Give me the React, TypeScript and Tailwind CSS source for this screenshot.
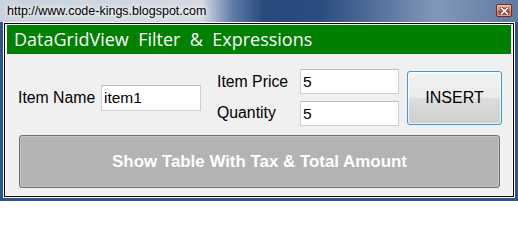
import React from "react";

const sans = "font-['Liberation_Sans',Arial,sans-serif]";

const TextBox = ({ value, className = "" }: { value: string; className?: string }) => (
  <div
    className={`flex items-center bg-white border border-[#cfcfcf] border-t-[#bdbdbd] pl-[2px] text-[15.5px] text-black ${className}`}
  >
    {value}
  </div>
);

const CloseButton = () => (
  <div className="absolute left-[496px] top-[4px] w-[16px] h-[13px] rounded-[2px] border border-[#6b2a1c] bg-[linear-gradient(180deg,#eab0a0_0%,#d98068_45%,#c2452a_55%,#d36c4c_100%)] flex items-center justify-center shadow-[inset_0_0_0_1px_rgba(255,255,255,0.35)]">
    <svg width="9" height="8" viewBox="0 0 9 8">
      <path d="M1.5 1.2 L7.5 6.8 M7.5 1.2 L1.5 6.8" stroke="#5a2418" strokeWidth="3.2" strokeLinecap="square" />
      <path d="M1.5 1.2 L7.5 6.8 M7.5 1.2 L1.5 6.8" stroke="#ffffff" strokeWidth="1.8" strokeLinecap="square" />
    </svg>
  </div>
);

export default function App() {
  return (
    <div className={`relative w-[518px] h-[201px] flex flex-col overflow-hidden bg-[#2d5490] ${sans}`}>
      {/* title bar */}
      <div className="h-[22px] shrink-0 flex items-center pl-[7px] bg-[linear-gradient(90deg,#c9d2de_0%,#d4dae3_39%,#5d7ba6_45%,#28497c_51%,#2b4c7f_62%,#8198b9_84%,#7189ad_92%,#5f7aa2_100%)]">
        <span className="text-[12.5px] text-black [text-shadow:0_0_6px_#fff,0_0_6px_#fff]">
          http://www.code-kings.blogspot.com
        </span>
      </div>
      <CloseButton />

      {/* client area */}
      <div className="mx-[3px] mb-[3px] flex-1 border border-white">
        <div className="h-full border border-black">
          <div className="h-full border border-white bg-[#f0f0f0] flex flex-col">
            <div className="h-[29px] shrink-0 mx-px bg-[#008000] flex items-center pl-[7px]">
              <span className="whitespace-pre text-white text-[18px] font-['Open_Sans','Noto_Sans',sans-serif]">
                DataGridView  Filter  &amp;  Expressions
              </span>
            </div>

            <div className="flex flex-col pl-[12px] pt-[15px]">
              <div className="flex items-center h-[57px]">
                <div className="flex items-center">
                  <span className="w-[83px] text-[15.8px] text-black">Item Name</span>
                  <TextBox value="item1" className="w-[100px] h-[26px]" />
                </div>

                <div className="ml-[16px] flex flex-col gap-[7px]">
                  <div className="flex items-center h-[25px]">
                    <span className="w-[83px] text-[15.8px] text-black">Item Price</span>
                    <TextBox value="5" className="w-[99px] h-[25px]" />
                  </div>
                  <div className="flex items-center h-[25px]">
                    <span className="w-[83px] text-[15.8px] text-black -mt-[2px]">Quantity</span>
                    <TextBox value="5" className="w-[99px] h-[25px]" />
                  </div>
                </div>

                <button className="ml-[8px] w-[95px] h-[54px] rounded-[3px] border border-[#3c9ad6] bg-[linear-gradient(180deg,#f3f3f3_0%,#ebebeb_48%,#dcdcdc_52%,#cfcfcf_100%)] shadow-[inset_0_0_0_1px_rgba(255,255,255,0.7)] text-[16px] text-black">
                  INSERT
                </button>
              </div>

              <button className="mt-[9px] ml-px w-[481px] h-[53px] rounded-[3px] border border-[#707070] bg-[#b3b3b3] shadow-[inset_0_0_0_1px_#c4c4c4] text-white font-bold text-[16.9px]">
                Show Table With Tax &amp; Total Amount
              </button>
            </div>
          </div>
        </div>
      </div>
    </div>
  );
}
